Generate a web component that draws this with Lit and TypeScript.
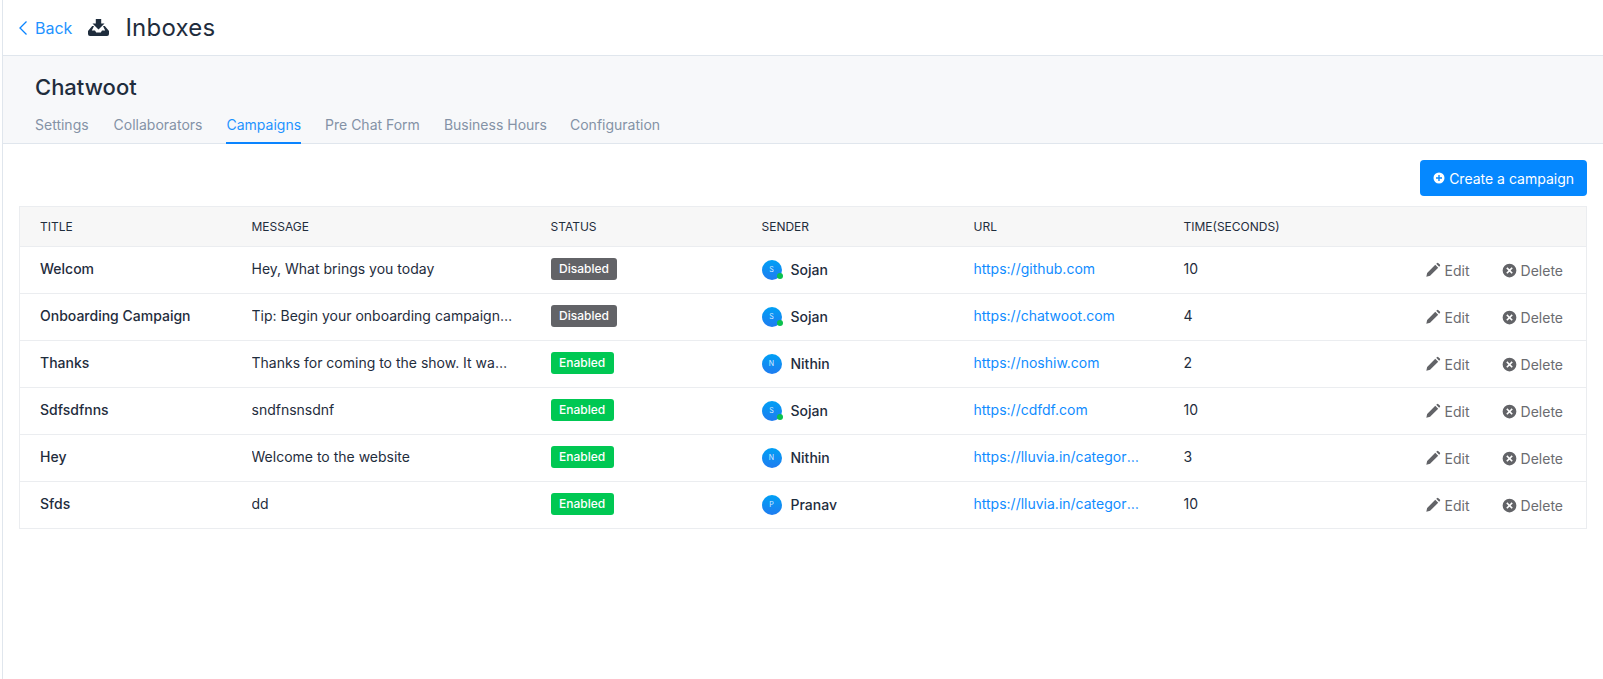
import { LitElement, html, css, svg } from "lit";
import { customElement } from "lit/decorators.js";

type Campaign = {
  title: string;
  message: string;
  enabled: boolean;
  sender: string;
  online: boolean;
  url: string;
  time: number;
};

const campaigns: Campaign[] = [
  { title: "Welcom", message: "Hey, What brings you today", enabled: false, sender: "Sojan", online: true, url: "https://github.com", time: 10 },
  { title: "Onboarding Campaign", message: "Tip: Begin your onboarding campaign with a short message", enabled: false, sender: "Sojan", online: true, url: "https://chatwoot.com", time: 4 },
  { title: "Thanks", message: "Thanks for coming to the show. It was a great pleasure", enabled: true, sender: "Nithin", online: false, url: "https://noshiw.com", time: 2 },
  { title: "Sdfsdfnns", message: "sndfnsnsdnf", enabled: true, sender: "Sojan", online: true, url: "https://cdfdf.com", time: 10 },
  { title: "Hey", message: "Welcome to the website", enabled: true, sender: "Nithin", online: false, url: "https://lluvia.in/category/shoes/all", time: 3 },
  { title: "Sfds", message: "dd", enabled: true, sender: "Pranav", online: false, url: "https://lluvia.in/category/shoes/all", time: 10 },
];

const tabs = ["Settings", "Collaborators", "Campaigns", "Pre Chat Form", "Business Hours", "Configuration"];

const inboxIcon = svg`<path d="M7.8 0h5.4v4.6h3.3l-6 5.9-6-5.9h3.3z"/><path d="M4.2 7H6L3.8 11.6H7l1.2 2h4.6l1.2-2h3.2L15 7h1.8L21 12v3a2 2 0 0 1-2 2H2a2 2 0 0 1-2-2v-3z"/>`;
const pencilIcon = svg`<path d="M2 22l1.2-5.6L15.4 4.2l4.4 4.4L7.6 20.8zM16.8 2.8l1.1-1.1a1.6 1.6 0 0 1 2.2 0l2.2 2.2a1.6 1.6 0 0 1 0 2.2l-1.1 1.1z"/>`;
const closeIcon = svg`<path fill-rule="evenodd" d="M12 1a11 11 0 1 1 0 22 11 11 0 0 1 0-22zM8.6 6.8 6.8 8.6 10.2 12l-3.4 3.4 1.8 1.8 3.4-3.4 3.4 3.4 1.8-1.8-3.4-3.4 3.4-3.4-1.8-1.8-3.4 3.4z"/>`;
const plusIcon = svg`<path fill-rule="evenodd" d="M12 1a11 11 0 1 1 0 22 11 11 0 0 1 0-22zM10.6 6v4.6H6v2.8h4.6V18h2.8v-4.6H18v-2.8h-4.6V6z"/>`;

@customElement("app-root")
export class AppRoot extends LitElement {
  static styles = css`
    :host {
      display: block;
      height: 679px;
      overflow: hidden;
      background: #fff;
      font-family: Inter, "Noto Sans", sans-serif;
      color: #1f2d3d;
      -webkit-font-smoothing: antialiased;
    }
    .page {
      height: 100%;
      margin-left: 2px;
      border-left: 1px solid #e0e6ed;
    }
    .topbar {
      display: flex;
      align-items: center;
      height: 56px;
      box-sizing: border-box;
      border-bottom: 1px solid #e0e6ed;
      padding-left: 15px;
    }
    .back {
      display: flex;
      align-items: center;
      gap: 7px;
      color: #1f93ff;
      font-size: 16px;
    }
    .back svg {
      width: 10px;
      height: 16px;
      fill: none;
      stroke: #0a84ff;
      stroke-width: 1.3;
    }
    .inbox-icon {
      width: 21px;
      height: 17px;
      margin-left: 16px;
      fill: #1f2d3d;
    }
    h1 {
      margin: 0 0 0 16px;
      font-size: 24px;
      font-weight: 400;
      line-height: 30px;
      letter-spacing: 0.01em;
    }
    .subheader {
      height: 88px;
      box-sizing: border-box;
      background: #f7f8fa;
      border-bottom: 1px solid #e0e6ed;
      padding: 19px 32px 0;
    }
    h2 {
      margin: 0;
      font-size: 22px;
      font-weight: 500;
      line-height: 25px;
    }
    .tabs {
      display: flex;
      gap: 24px;
      margin-top: 13px;
    }
    .tab {
      height: 31px;
      box-sizing: border-box;
      font-size: 14px;
      line-height: 20px;
      color: #8492a6;
      padding-top: 2px;
    }
    .tab:first-child {
      margin-right: 1px;
    }
    .tab:nth-child(5) {
      margin-right: -1px;
    }
    .tab.active {
      color: #1f93ff;
      border-bottom: 2px solid #0a84ff;
    }
    .content {
      padding: 16px 16px 0;
    }
    .toolbar {
      display: flex;
      justify-content: flex-end;
      margin-bottom: 10px;
    }
    .create {
      display: flex;
      align-items: center;
      gap: 4px;
      height: 36px;
      box-sizing: border-box;
      padding: 0 13px;
      border-radius: 4px;
      background: #0588ff;
      color: #fff;
      font-size: 14px;
    }
    .create svg {
      width: 12px;
      height: 12px;
      fill: #fff;
    }
    table {
      width: 1568px;
      table-layout: fixed;
      border-collapse: collapse;
      border: 1px solid #ebedf0;
      font-size: 14px;
    }
    th {
      height: 40px;
      box-sizing: border-box;
      padding: 0 0 0 20px;
      background: #f7f7f7;
      border-bottom: 1px solid #ebedf0;
      text-align: left;
      font-size: 12px;
      font-weight: 400;
      color: #1f2d3d;
      text-transform: uppercase;
    }
    td {
      height: 47px;
      box-sizing: border-box;
      padding: 0 0 3px 20px;
      border-bottom: 1px solid #ebedf0;
      white-space: nowrap;
      overflow: hidden;
    }
    td.sender-cell {
      padding-bottom: 1px;
    }
    .title {
      font-weight: 500;
    }
    .ellipsis {
      display: block;
      overflow: hidden;
      text-overflow: ellipsis;
    }
    .message .ellipsis {
      width: 262px;
    }
    .url .ellipsis {
      width: 168px;
      color: #0f8cff;
    }
    .badge {
      display: inline-block;
      height: 22px;
      box-sizing: border-box;
      padding: 0 8.5px;
      border-radius: 3px;
      font-size: 12px;
      font-weight: 500;
      line-height: 22px;
      color: #fff;
      background: #626367;
      vertical-align: middle;
    }
    .badge.on {
      background: #00c853;
    }
    .sender {
      display: flex;
      align-items: center;
      gap: 9px;
      font-weight: 500;
    }
    .avatar {
      position: relative;
      width: 20px;
      height: 20px;
      border-radius: 50%;
      background: linear-gradient(#00a0f5, #1f7cf0);
      color: #d7ecff;
      font-size: 7px;
      line-height: 20px;
      text-align: center;
      font-weight: 400;
    }
    .dot {
      position: absolute;
      right: -1px;
      bottom: 1px;
      width: 6px;
      height: 6px;
      border-radius: 50%;
      background: #0bc14e;
    }
    td.actions {
      padding: 0;
    }
    .actions-row {
      display: flex;
      justify-content: flex-end;
      gap: 32px;
      padding-right: 23px;
      color: #6b6c70;
    }
    .action {
      display: flex;
      align-items: center;
      gap: 4px;
    }
    .action svg {
      width: 16px;
      height: 16px;
      fill: #626367;
    }
    .action svg.close {
      width: 15px;
      height: 15px;
    }
  `;

  render() {
    return html`
      <div class="page">
        <header class="topbar">
          <div class="back">
            <svg viewBox="0 0 10 16"><path d="M8.5 1.5 2 8l6.5 6.5" /></svg>
            <span>Back</span>
          </div>
          <svg class="inbox-icon" viewBox="0 0 21 17">${inboxIcon}</svg>
          <h1>Inboxes</h1>
        </header>
        <section class="subheader">
          <h2>Chatwoot</h2>
          <nav class="tabs">
            ${tabs.map((t) => html`<div class="tab ${t === "Campaigns" ? "active" : ""}">${t}</div>`)}
          </nav>
        </section>
        <main class="content">
          <div class="toolbar">
            <div class="create">
              <svg viewBox="0 0 24 24">${plusIcon}</svg>
              <span>Create a campaign</span>
            </div>
          </div>
          <table>
            <colgroup>
              <col style="width: 212px" />
              <col style="width: 299px" />
              <col style="width: 211px" />
              <col style="width: 212px" />
              <col style="width: 210px" />
              <col style="width: 211px" />
              <col />
            </colgroup>
            <thead>
              <tr>
                <th>Title</th>
                <th>Message</th>
                <th>Status</th>
                <th>Sender</th>
                <th>URL</th>
                <th>Time(seconds)</th>
                <th></th>
              </tr>
            </thead>
            <tbody>
              ${campaigns.map(
                (c) => html`
                  <tr>
                    <td class="title">${c.title}</td>
                    <td class="message"><span class="ellipsis">${c.message}</span></td>
                    <td><span class="badge ${c.enabled ? "on" : ""}">${c.enabled ? "Enabled" : "Disabled"}</span></td>
                    <td class="sender-cell">
                      <div class="sender">
                        <div class="avatar">${c.sender[0]}${c.online ? html`<span class="dot"></span>` : ""}</div>
                        <span>${c.sender}</span>
                      </div>
                    </td>
                    <td class="url"><span class="ellipsis">${c.url}</span></td>
                    <td>${c.time}</td>
                    <td class="actions">
                      <div class="actions-row">
                        <span class="action"><svg viewBox="0 0 24 24">${pencilIcon}</svg>Edit</span>
                        <span class="action"><svg class="close" viewBox="0 0 24 24">${closeIcon}</svg>Delete</span>
                      </div>
                    </td>
                  </tr>
                `
              )}
            </tbody>
          </table>
        </main>
      </div>
    `;
  }
}
